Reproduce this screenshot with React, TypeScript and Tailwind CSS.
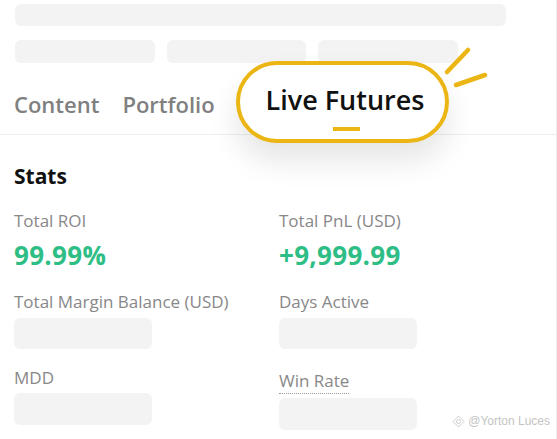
export default function App() {
  return (
    <div className="relative w-[557px] h-[439px] overflow-hidden bg-white font-['Open_Sans',sans-serif] border-r border-[#ececec]">
      {/* skeleton header */}
      <div className="px-[15px] pt-[4px]">
        <div className="w-[491px] h-[22px] rounded-md bg-[#f3f3f3]" />
        <div className="mt-[14px] flex gap-[12px]">
          <div className="w-[140px] h-[23px] rounded-md bg-[#f3f3f3]" />
          <div className="w-[139px] h-[23px] rounded-md bg-[#f3f3f3]" />
          <div className="w-[140px] h-[23px] rounded-md bg-[#f3f3f3]" />
        </div>
      </div>

      {/* tabs */}
      <div className="relative h-[72px] border-b border-[#eeeeee]">
        <div className="flex gap-[23px] pl-[14px] pt-[30px] text-[22px] font-semibold text-[#808080] leading-none">
          <span>Content</span>
          <span>Portfolio</span>
        </div>

        {/* highlighted tab callout */}
        <div className="absolute left-[236px] top-[-2px] w-[213px] h-[82px] rounded-full border-[4px] border-[#ebb513] bg-white shadow-[0_18px_30px_rgba(0,0,0,0.10)] flex items-center justify-center">
          <span className="text-[27px] font-semibold text-[#111] leading-none -mt-[6px] ml-[5px]">Live Futures</span>
          <div className="absolute left-[93px] bottom-[8px] w-[27px] h-[4px] bg-[#ebb513]" />
        </div>
        <svg className="absolute left-[440px] top-[-18px]" width="56" height="50" viewBox="0 0 56 50">
          <line x1="7" y1="27" x2="28" y2="5" stroke="#ebb513" strokeWidth="4.5" strokeLinecap="round" />
          <line x1="16" y1="40" x2="45" y2="30" stroke="#ebb513" strokeWidth="4.5" strokeLinecap="round" />
        </svg>
      </div>

      {/* stats */}
      <div className="px-[14px] pt-[31px]">
        <h2 className="text-[21px] font-bold text-[#111] leading-none">Stats</h2>
        <div className="mt-[25px] grid grid-cols-[265px_1fr]">
          <div>
            <div className="text-[17px] text-[#888] leading-none">Total ROI</div>
            <div className="mt-[13px] text-[26px] font-bold text-[#2ebd85] leading-none tracking-[0.3px]">99.99%</div>
          </div>
          <div>
            <div className="text-[17px] text-[#888] leading-none">Total PnL (USD)</div>
            <div className="mt-[13px] text-[26px] font-bold text-[#2ebd85] leading-none tracking-[0.3px]">+9,999.99</div>
          </div>

          <div className="mt-[25px]">
            <div className="text-[17px] text-[#888] leading-none">Total Margin Balance (USD)</div>
            <div className="mt-[8px] w-[138px] h-[31px] rounded-md bg-[#f3f3f3]" />
          </div>
          <div className="mt-[25px]">
            <div className="text-[17px] text-[#888] leading-none">Days Active</div>
            <div className="mt-[8px] w-[138px] h-[31px] rounded-md bg-[#f3f3f3]" />
          </div>

          <div className="mt-[20px]">
            <div className="text-[17px] text-[#888] leading-none">MDD</div>
            <div className="mt-[7px] w-[138px] h-[32px] rounded-md bg-[#f3f3f3]" />
          </div>
          <div className="mt-[20px]">
            <span className="text-[17px] text-[#888] leading-none border-b border-dotted border-[#999] pb-[1px]">Win Rate</span>
            <div className="mt-[5px] w-[138px] h-[32px] rounded-md bg-[#f3f3f3]" />
          </div>
        </div>
      </div>

      {/* watermark */}
      <div className="absolute right-[6px] bottom-[9px] flex items-center gap-[3px] text-[12px] text-[#c4c4c4] font-['Liberation_Sans',sans-serif]">
        <svg width="13" height="13" viewBox="0 0 13 13" fill="none" stroke="#cccccc" strokeWidth="1">
          <path d="M6.5 1 L12 6.5 L6.5 12 L1 6.5 Z" />
          <circle cx="6.5" cy="6.5" r="2" />
        </svg>
        <span>@Yorton Luces</span>
      </div>
    </div>
  );
}
